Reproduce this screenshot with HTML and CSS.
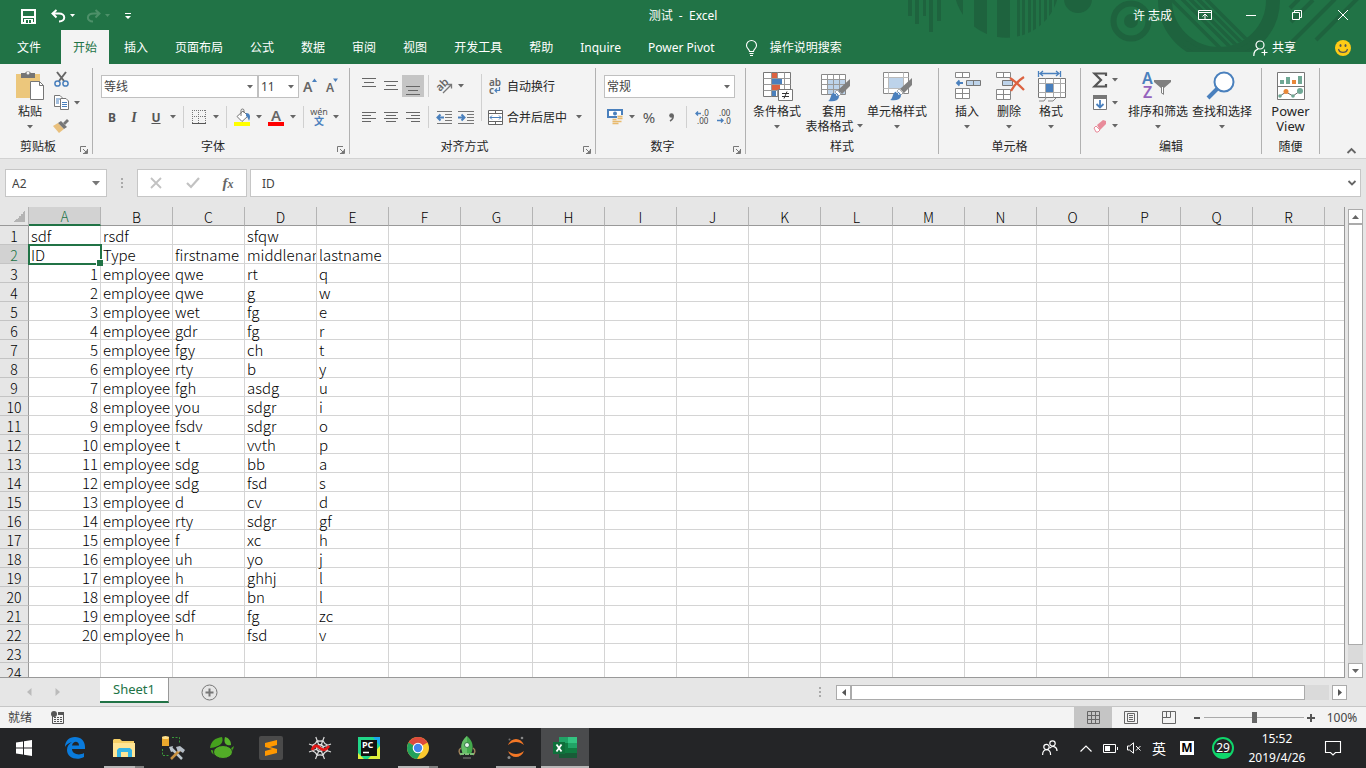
FILE: index.html
```html
<!DOCTYPE html>
<html lang="zh-CN">
<head>
<meta charset="utf-8">
<title>测试 - Excel</title>
<link rel="stylesheet" href="styles.css">
</head>
<body>
<svg class="defs" width="0" height="0" aria-hidden="true">
  <symbol id="caret" viewBox="0 0 6 4"><path d="M0 0h6L3 3.5z" fill="#666"/></symbol>
  <symbol id="launch" viewBox="0 0 8 8"><path d="M.5 6V.5H6M3 3l3 3M7.500 3v4.500H3" fill="none" stroke="#777"/><path d="M7 4v3H4z" fill="#777"/></symbol>
  <symbol id="brush" viewBox="0 0 22 23"><path d="M22 0v7l-8 8-4-4z" fill="#808080"/><path d="M9 11l4 4-2 2-4-4z" fill="#fff" stroke="#808080" stroke-width=".6"/><path d="M0 22c3-1 2-6 5-8 3-1 6 1 6 4-1 4-5 5-11 4z" fill="#4a80bd"/><path d="M6 14c2 0 3 2 3 3" stroke="#fff" fill="none"/></symbol>
</svg>

<header class="top">
  <svg class="art" width="466" height="64" viewBox="0 0 466 64" aria-hidden="true">
    <clipPath id="c1"><circle cx="106.500" cy="-15" r="52.700"/></clipPath>
    <clipPath id="c2"><circle cx="319" cy="0" r="47"/></clipPath>
    <clipPath id="c3"><path d="M240 0h160v52H240z"/></clipPath>
    <g fill="#1e633e">
      <path d="M8 0h4v16H8zM15 0h4v24h-4zM23 0h3v16h-3zM29 0h4v32h-4zM37 0h4v21h-4z"/>
      <path clip-path="url(#c1)" d="M50 0h13v50H50zM74 0h13v50H74zM97 0h13v50H97zM117 0h3v50h-3zM122 0h3v50h-3zM128 0h3v50h-3zM133 0h3v50h-3zM139 0h2v50h-2zM144 0h3v50h-3zM149 0h3v50h-3zM154 0h3v50h-3z"/>
      <circle cx="178" cy="-1" r="14"/><circle cx="231" cy="21" r="7"/>
    </g>
    <g fill="none" stroke="#1e633e">
      <circle cx="231" cy="21" r="17.500" stroke-width="6"/>
      <circle cx="319" cy="0" r="54" stroke-width="14" clip-path="url(#c3)"/>
      <path d="M284 43l16 9h38l16-9" stroke-width="6" clip-path="url(#c3)"/>
      <path d="M262-10l60 60M273-10l60 60M281-10l60 60M289-10l60 60M297-10l60 60" stroke-width="3.500" clip-path="url(#c2)"/>
      <path d="M390 8l9-9M391 22l22-22M390 44l45-45M416 40l42-42" stroke-width="4"/>
    </g>
  </svg>
  <div class="titlebar">
    <div class="quick">
      <button class="q-save" aria-label="保存"><svg width="15" height="15" viewBox="0 0 15 15"><path d="M1 1h13v13H1zM1 8h13" fill="none" stroke="#fff" stroke-width="2"/><path d="M3 10h9v4H3z" fill="#fff"/><path d="M5 11h2v3H5zM8 11h2v3H8z" fill="#217346"/></svg></button>
      <button class="q-undo" aria-label="撤消"><svg width="25" height="14" viewBox="0 0 25 14"><path d="M5.500 1L1.500 4.500l4 4M2 4.500h6c7 0 7 8 0 8" fill="none" stroke="#fff" stroke-width="2"/><path d="M19 5h5l-2.500 3z" fill="#fff"/></svg></button>
      <button class="q-redo" aria-label="恢复"><svg width="25" height="14" viewBox="0 0 25 14"><path d="M9.500 1l4 3.500-4 4M13 4.500H8c-8 0-8 8-1 8" fill="none" stroke="#4d9069" stroke-width="2"/><path d="M19 5h5l-2.500 3z" fill="#4d9069"/></svg></button>
      <button class="q-more" aria-label="自定义快速访问工具栏"><svg width="6" height="7" viewBox="0 0 6 7"><path d="M0 0h6v1H0zM0 3h6L3 6z" fill="#fff"/></svg></button>
    </div>
    <div class="doc">测试&nbsp; - &nbsp;Excel</div>
    <div class="win">
      <span class="user">许 志成</span>
      <button aria-label="功能区显示选项"><svg width="14" height="12" viewBox="0 0 14 12"><path d="M.5 1.500h13v9H.5zM.5 3.500h13M7 10V5.500M4.500 7.500L7 5l2.500 2.500" fill="none" stroke="#fff"/></svg></button>
      <button aria-label="最小化"><svg width="10" height="10" viewBox="0 0 10 10"><path d="M0 5.500h10" stroke="#fff"/></svg></button>
      <button aria-label="还原"><svg width="10" height="10" viewBox="0 0 10 10"><path d="M.5 2.500h7v7h-7zM2.500 2.500v-2h7v7h-2" fill="none" stroke="#fff"/></svg></button>
      <button aria-label="关闭"><svg width="10" height="10" viewBox="0 0 10 10"><path d="M0 0l10 10M10 0L0 10" stroke="#fff"/></svg></button>
    </div>
  </div>
  <nav class="tabs">
    <button class="file">文件</button><button class="on">开始</button><button>插入</button><button>页面布局</button><button>公式</button><button>数据</button><button>审阅</button><button>视图</button><button>开发工具</button><button>帮助</button><button>Inquire</button><button>Power Pivot</button>
    <button class="tell"><svg width="13" height="16" viewBox="0 0 13 16"><path d="M4.500 11.500C4.500 9 1.500 8.500 1.500 5.500a5 5 0 0 1 10 0c0 3-3 3.500-3 6zM4.500 13.500h4M5 15.500h3" fill="none" stroke="#fff" stroke-width="1.100"/></svg>操作说明搜索</button>
    <button class="share"><svg width="15" height="16" viewBox="0 0 15 16"><circle cx="7" cy="5" r="4" fill="none" stroke="#fff" stroke-width="1.200"/><path d="M.8 16c0-5 2-6 4.500-7M8.500 12.500h6M11.500 9.500v6" fill="none" stroke="#fff" stroke-width="1.200"/></svg>共享</button>
    <button class="smile" aria-label="反馈"><svg width="16" height="16" viewBox="0 0 16 16"><circle cx="8" cy="8" r="8" fill="#fecb16"/><ellipse cx="5.500" cy="5.500" rx="1" ry="1.600" fill="#555"/><ellipse cx="10.500" cy="5.500" rx="1" ry="1.600" fill="#555"/><path d="M3.500 9c1 4.500 8 4.500 9 0" fill="none" stroke="#555" stroke-width="1.200"/></svg></button>
  </nav>
</header>

<section class="ribbon" aria-label="开始">
  <div class="group g-clip">
    <div class="tools">
      <button class="big paste"><svg width="28" height="32" viewBox="0 0 28 32"><path d="M0 4h24v24H0z" fill="#ecc77c"/><path d="M5 3h4a3.500 3.500 0 0 1 6 0h4v5H5z" fill="#757575"/><circle cx="12" cy="3" r="1.500" fill="#f3f3f3"/><path d="M14.500 11.500h9l4 4v14h-13z" fill="#fff" stroke="#777"/><path d="M23.500 11.500v4h4" fill="none" stroke="#777"/></svg><span>粘贴</span><svg class="caret"><use href="#caret"/></svg></button>
      <div class="stack">
        <button aria-label="剪切"><svg width="15" height="15" viewBox="0 0 15 15"><path d="M3 0l7 9M12 0L5 9" stroke="#666" stroke-width="2"/><circle cx="3.500" cy="11.500" r="2.600" fill="none" stroke="#4a80bd" stroke-width="1.500"/><circle cx="11.500" cy="11.500" r="2.600" fill="none" stroke="#4a80bd" stroke-width="1.500"/></svg></button>
        <button aria-label="复制"><svg width="15" height="15" viewBox="0 0 15 15"><path d="M.5.500H6l2 2v9H.5z" fill="#fff" stroke="#777"/><path d="M2 4h4M2 6h3M2 8h3" stroke="#4a80bd"/><path d="M6.500 3.500H12l2.500 2.500v8.500h-8z" fill="#fff" stroke="#777"/><path d="M8 7.500h5M8 9.500h5M8 11.500h5" stroke="#4a80bd"/></svg></button>
        <button class="dd" aria-label="复制选项"><svg class="caret"><use href="#caret"/></svg></button>
        <button aria-label="格式刷"><svg width="16" height="14" viewBox="0 0 16 14"><path d="M0 7l5-3 6 6-5 4z" fill="#e9c07d"/><path d="M5 4l3-2 6 6-3 2z" fill="#777"/><path d="M10 4l4-4 2 2-4 4z" fill="#777"/></svg></button>
      </div>
    </div>
    <footer><span>剪贴板</span><button aria-label="剪贴板窗格"><svg width="8" height="8"><use href="#launch"/></svg></button></footer>
  </div>

  <div class="group g-font">
    <div class="tools rows">
      <div class="row">
        <select class="f-name" aria-label="字体"><option>等线</option></select><select class="f-size" aria-label="字号"><option>11</option></select>
        <button class="tb" aria-label="增大字号"><svg width="14" height="16" viewBox="0 0 14 16"><text x="0" y="14" class="ic" font-size="14">A</text><path d="M9 4h5l-2.500-3.500z" fill="#4a80bd"/></svg></button>
        <button class="tb" aria-label="减小字号"><svg width="14" height="16" viewBox="0 0 14 16"><text x="1" y="14" class="ic" font-size="12">A</text><path d="M8 .5h5L10.500 4z" fill="#4a80bd"/></svg></button>
      </div>
      <div class="row">
        <button class="tb b">B</button><button class="tb i">I</button><button class="tb u">U</button><button class="dd" aria-label="下划线选项"><svg class="caret"><use href="#caret"/></svg></button><i class="sep"></i>
        <button class="tb" aria-label="边框"><svg width="14" height="14" viewBox="0 0 14 14"><path d="M0 .5h14M.5 0v13M13.500 0v13M6.500 0v13M0 6.500h14" stroke="#777" stroke-dasharray="1 1"/><path d="M0 13.500h14" stroke="#555"/></svg></button><button class="dd" aria-label="边框选项"><svg class="caret"><use href="#caret"/></svg></button><i class="sep"></i>
        <button class="tb" aria-label="填充颜色"><svg width="17" height="17" viewBox="0 0 17 17"><path d="M3 7.500L9 2l5 5-6 5.500z" fill="#fff" stroke="#777"/><path d="M7 7V1.500a1.500 1.500 0 0 1 3 0V4" fill="none" stroke="#777"/><path d="M12 4c4 0 5 3 3 8-1-2-1-4-3-5z" fill="#4a80bd"/><path d="M0 13h16v4H0z" fill="#ff0"/></svg></button><button class="dd" aria-label="填充选项"><svg class="caret"><use href="#caret"/></svg></button>
        <button class="tb" aria-label="字体颜色"><svg width="17" height="17" viewBox="0 0 17 17"><text x="3" y="12" class="ic" font-size="15">A</text><path d="M0 13h16v4H0z" fill="red"/></svg></button><button class="dd" aria-label="字体颜色选项"><svg class="caret"><use href="#caret"/></svg></button><i class="sep"></i>
        <button class="tb wen" aria-label="显示拼音字段"><span>wén</span><b>文</b></button><button class="dd" aria-label="拼音选项"><svg class="caret"><use href="#caret"/></svg></button>
      </div>
    </div>
    <footer><span>字体</span><button aria-label="字体设置"><svg width="8" height="8"><use href="#launch"/></svg></button></footer>
  </div>

  <div class="group g-align">
    <div class="tools">
      <div class="rows">
        <div class="row">
          <button class="tb" aria-label="顶端对齐"><svg width="14" height="16" viewBox="0 0 14 16"><path d="M0 .5h14M2 4.500h10M0 8.500h14" stroke="#666"/></svg></button><button class="tb" aria-label="垂直居中"><svg width="14" height="16" viewBox="0 0 14 16"><path d="M0 3.500h14M2 7.500h10M0 11.500h14" stroke="#666"/></svg></button><button class="tb sel" aria-label="底端对齐"><svg width="14" height="16" viewBox="0 0 14 16"><path d="M0 8.500h14M2 12.500h10M0 16.500h14" stroke="#666"/></svg></button><i class="sep"></i>
          <button class="tb" aria-label="方向"><svg width="17" height="16" viewBox="0 0 17 16"><text x="0" y="0" class="ic" font-size="11" transform="translate(4 14) rotate(-45)">ab</text><path d="M7 15l8-8M11.500 6.500H15.500v4" fill="none" stroke="#777" stroke-width="1.300"/></svg></button><button class="dd" aria-label="方向选项"><svg class="caret"><use href="#caret"/></svg></button>
        </div>
        <div class="row">
          <button class="tb" aria-label="左对齐"><svg width="14" height="11" viewBox="0 0 14 11"><path d="M0 .5h14M0 3.500h9M0 6.500h14M0 9.500h9" stroke="#666"/></svg></button><button class="tb" aria-label="居中"><svg width="14" height="11" viewBox="0 0 14 11"><path d="M0 .5h14M2 3.500h10M0 6.500h14M2 9.500h10" stroke="#666"/></svg></button><button class="tb" aria-label="右对齐"><svg width="14" height="11" viewBox="0 0 14 11"><path d="M0 .5h14M5 3.500h9M0 6.500h14M5 9.500h9" stroke="#666"/></svg></button><i class="sep"></i>
          <button class="tb" aria-label="减少缩进"><svg width="16" height="13" viewBox="0 0 16 13"><path d="M1 .5h15M9 3.500h7M9 6.500h7M9 9.500h7M1 12.500h15" stroke="#777"/><path d="M8 6.500H2M4.500 3.500l-3 3 3 3" fill="none" stroke="#4a80bd" stroke-width="2"/></svg></button><button class="tb" aria-label="增加缩进"><svg width="16" height="13" viewBox="0 0 16 13"><path d="M0 .5h16M9 3.500h7M9 6.500h7M9 9.500h7M0 12.500h16" stroke="#777"/><path d="M0 6.500h6M3.500 3.500l3 3-3 3" fill="none" stroke="#4a80bd" stroke-width="2"/></svg></button>
        </div>
      </div>
      <i class="sep tall"></i>
      <div class="rows">
        <button class="wide"><svg width="15" height="16" viewBox="0 0 15 16"><text x="1" y="8" class="ic" font-size="10">ab</text><text x="1" y="16" class="ic" font-size="10">c</text><path d="M11.500 9v3.500H7M9 10.500l-2 2 2 2" fill="none" stroke="#4a80bd" stroke-width="1.200"/></svg>自动换行</button>
        <div class="row"><button class="wide"><svg width="15" height="15" viewBox="0 0 15 15"><path d="M.5.500h14v14H.5zM.5 3.500h14M.5 11.500h14M7.500 0v4M7.500 11v4" fill="#fff" stroke="#666"/><path d="M2 7.500h11M4 5.500l-2 2 2 2M11 5.500l2 2-2 2" fill="none" stroke="#4a80bd"/></svg>合并后居中</button><button class="dd wd" aria-label="合并选项"><svg class="caret"><use href="#caret"/></svg></button></div>
      </div>
    </div>
    <footer><span>对齐方式</span><button aria-label="对齐设置"><svg width="8" height="8"><use href="#launch"/></svg></button></footer>
  </div>

  <div class="group g-num">
    <div class="tools rows">
      <div class="row"><select class="n-fmt" aria-label="数字格式"><option>常规</option></select></div>
      <div class="row">
        <button class="tb" aria-label="会计数字格式"><svg width="17" height="16" viewBox="0 0 17 16"><path d="M1 1h14v7H1z" fill="#fff" stroke="#4a80bd" stroke-width="2"/><circle cx="8" cy="4.500" r="2" fill="#4a80bd"/><path d="M10 6h7v8h-3v2H5v-6h5z" fill="#f3f3f3"/><path d="M10.500 7.500h5M10.500 9.500h5M5.500 10.500h4M5.500 12.500h9M5.500 14.500h6" stroke="#e8b96c" stroke-width="1.600"/></svg></button><button class="dd" aria-label="会计格式选项"><svg class="caret"><use href="#caret"/></svg></button><button class="tb pct">%</button><button class="tb com" aria-label="千位分隔样式"><svg width="5" height="9" viewBox="0 0 5 9"><circle cx="2.500" cy="2.500" r="2.300" fill="#666"/><path d="M3.800 2c1 3-1 5-2.800 6" fill="none" stroke="#666" stroke-width="1.500"/></svg></button><i class="sep"></i>
        <button class="tb" aria-label="增加小数位数"><svg width="15" height="14" viewBox="0 0 15 14"><text x="7" y="6" class="dec">.0</text><text x="2" y="14" class="dec">.00</text><path d="M6 3.500H1M3 1.500l-2 2 2 2" fill="none" stroke="#4a80bd" stroke-width="1.400"/></svg></button><button class="tb" aria-label="减少小数位数"><svg width="15" height="14" viewBox="0 0 15 14"><text x="2" y="6" class="dec">.00</text><text x="7" y="14" class="dec">.0</text><path d="M0 10.500h6M4 8.500l2 2-2 2" fill="none" stroke="#4a80bd" stroke-width="1.400"/></svg></button>
      </div>
    </div>
    <footer><span>数字</span><button aria-label="数字设置"><svg width="8" height="8"><use href="#launch"/></svg></button></footer>
  </div>

  <div class="group g-style">
    <div class="tools">
      <button class="big w58"><svg width="32" height="32" viewBox="0 0 32 32"><path d="M2.500 2.500h27v24h-27z" fill="#fff" stroke="#777"/><path d="M2.500 8.500h27M2.500 14.500h27M2.500 20.500h27M10.500 2.500v24M16.500 2.500v24M23.500 2.500v24" stroke="#999"/><path d="M11 3h5v5h-5zM11 15h8v5h-8z" fill="#dc6240"/><path d="M11 9h10v5H11zM11 21h4v5h-4z" fill="#4a80bd"/><path d="M17.500 19.500h14v11h-14z" fill="#fff" stroke="#777"/><path d="M21 23.500h7M21 26.500h7M26 21.500l-3 7" stroke="#333"/></svg><span>条件格式</span><svg class="caret"><use href="#caret"/></svg></button>
      <button class="big w56"><svg width="32" height="32" viewBox="0 0 32 32"><path d="M3.500 4.500h24v20h-24z" fill="#fff" stroke="#888"/><path d="M10 10h17v14H10z" fill="#bdd3ea"/><path d="M3.500 9.500h24M3.500 14.500h24M3.500 19.500h24M9.500 4.500v20M15.500 4.500v20M21.500 4.500v20" stroke="#999"/><use href="#brush" x="10" y="9" width="22" height="23"/></svg><span>套用<br>表格格式 <svg class="caret"><use href="#caret"/></svg></span></button>
      <button class="big w70"><svg width="32" height="32" viewBox="0 0 32 32"><path d="M2.500 2.500h25v21h-25z" fill="#fff" stroke="#888"/><path d="M2.500 7.500h25M2.500 18.500h25M7.500 2.500v21M22.500 2.500v21" stroke="#bbb"/><path d="M8 8h14v10H8z" fill="#bdd3ea"/><use href="#brush" x="9" y="8" width="22" height="23"/></svg><span>单元格样式</span><svg class="caret"><use href="#caret"/></svg></button>
    </div>
    <footer><span>样式</span></footer>
  </div>

  <div class="group g-cell">
    <div class="tools">
      <button class="big w42"><svg width="32" height="32" viewBox="0 0 32 32"><path d="M4.500 2.500h14v5h-14zM11.500 2.500v5M4.500 18.500h14v10h-14zM4.500 23.500h14M11.500 18.500v10" fill="#fff" stroke="#888"/><path d="M15.500 10.500h14v5h-14zM22.500 10.500v5" fill="#bdd3ea" stroke="#777"/><path d="M12 13H6M8.500 10.500L6 13l2.500 2.500" fill="none" stroke="#4a80bd" stroke-width="1.800"/></svg><span>插入</span><svg class="caret"><use href="#caret"/></svg></button>
      <button class="big w42"><svg width="32" height="32" viewBox="0 0 32 32"><path d="M3.500 2.500h14v5h-14zM10.500 2.500v5M3.500 19.500h14v10h-14zM3.500 24.500h14M10.500 19.500v10" fill="#fff" stroke="#888"/><path d="M9.500 10.500h10v5h-10z" fill="#bdd3ea" stroke="#777"/><path d="M17 8c5 3 9 7 14 12M31 7c-5 3-9 7-13 14" fill="none" stroke="#dc6240" stroke-width="2.300"/></svg><span>删除</span><svg class="caret"><use href="#caret"/></svg></button>
      <button class="big w42"><svg width="32" height="32" viewBox="0 0 32 32"><path d="M3.500 1v6M25.500 1v6M5 3.500h19M8 1L5 3.500 8 6M21 1l3 2.500L21 6" fill="none" stroke="#4a80bd" stroke-width="1.300"/><path d="M3.500 8.500h27v19h-27z" fill="#fff" stroke="#777"/><path d="M3.500 13.500h27M3.500 22.500h27M10.500 8.500v19M18.500 8.500v19M25.500 8.500v19" stroke="#aaa"/><path d="M11 14h7v8h-7z" fill="#4a80bd"/><path d="M4 31h5l2-3M13 31h5l3-3" fill="none" stroke="#888"/></svg><span>格式</span><svg class="caret"><use href="#caret"/></svg></button>
    </div>
    <footer><span>单元格</span></footer>
  </div>

  <div class="group g-edit">
    <div class="tools">
      <div class="stack">
        <button aria-label="自动求和"><svg width="16" height="16" viewBox="0 0 16 16"><path d="M14 4V1.500H2.500L9 8l-6.500 6.500H14V12" fill="none" stroke="#555" stroke-width="2.200"/></svg></button><button class="dd" aria-label="求和选项"><svg class="caret"><use href="#caret"/></svg></button>
        <button aria-label="填充"><svg width="14" height="15" viewBox="0 0 14 15"><path d="M.5.500h13v14H.5z" fill="#fff" stroke="#777"/><path d="M0 0h14v4H0z" fill="#777"/><path d="M7 5v7M3.500 9L7 12.500 10.500 9" fill="none" stroke="#4a80bd" stroke-width="1.800"/></svg></button><button class="dd" aria-label="填充选项"><svg class="caret"><use href="#caret"/></svg></button>
        <button aria-label="清除"><svg width="14" height="14" viewBox="0 0 14 14"><path d="M1 9l2-2 4 4-2 2H3z" fill="#fff" stroke="#e88b9a"/><path d="M4 6l6-5 3 1v3l-6 6z" fill="#e88b9a"/></svg></button><button class="dd" aria-label="清除选项"><svg class="caret"><use href="#caret"/></svg></button>
      </div>
      <button class="big w64"><svg width="32" height="32" viewBox="0 0 32 32"><text x="0" y="14" font-size="16" font-weight="600" fill="#4a80bd">A</text><text x="1" y="28" font-size="16" font-weight="600" fill="#9563bd">Z</text><path d="M12 10h17v2l-7 6v7l-3-2v-5l-7-6z" fill="#808080"/><path d="M20 17h1v6h-1z" fill="#fff"/></svg><span>排序和筛选</span><svg class="caret"><use href="#caret"/></svg></button>
      <button class="big w64"><svg width="32" height="32" viewBox="0 0 32 32"><circle cx="18" cy="12" r="9.500" fill="#fff" stroke="#4a80bd" stroke-width="2"/><path d="M12 18L2 28" stroke="#4a80bd" stroke-width="4"/></svg><span>查找和选择</span><svg class="caret"><use href="#caret"/></svg></button>
    </div>
    <footer><span>编辑</span></footer>
  </div>

  <div class="group g-pv">
    <div class="tools"><button class="big w58 lat"><svg width="32" height="32" viewBox="0 0 32 32"><path d="M2.500 2.500h27v27h-27zM2.500 16.500h27" fill="#fff" stroke="#777"/><path d="M5 10h4v4H5zM11 7h4v7h-4zM23 6h4v8h-4z" fill="#70a895"/><path d="M17 10h4v4h-4z" fill="#e8883a"/><path d="M5 26l6-4 7 4 7-5" fill="none" stroke="#666"/><circle cx="5" cy="26" r="1.800" fill="#70a895"/><circle cx="11" cy="21.500" r="2.500" fill="#e8883a"/><circle cx="18" cy="26" r="1.800" fill="#70a895"/><circle cx="25" cy="21" r="3" fill="#70a895"/></svg><span>Power<br>View</span></button></div>
    <footer><span>随便</span></footer>
  </div>
  <button class="collapse" aria-label="折叠功能区"><svg width="9" height="6" viewBox="0 0 9 6"><path d="M.5 5l4-4 4 4" fill="none" stroke="#666" stroke-width="1.800"/></svg></button>
</section>

<section class="fbar">
  <div class="namebox"><input aria-label="名称框" value="A2"><button aria-label="名称列表"><svg width="8" height="5" viewBox="0 0 8 5"><path d="M0 0h8L4 4.500z" fill="#777"/></svg></button></div>
  <svg class="grip" width="2" height="11" viewBox="0 0 2 11"><path d="M0 0h2v2H0zM0 4h2v2H0zM0 8h2v2H0z" fill="#aaa"/></svg>
  <div class="fx">
    <button aria-label="取消"><svg width="12" height="12" viewBox="0 0 12 12"><path d="M1 1l10 10M11 1L1 11" stroke="#c2c2c2" stroke-width="1.800"/></svg></button>
    <button aria-label="输入"><svg width="13" height="12" viewBox="0 0 13 12"><path d="M1 6l4 4 8-9" fill="none" stroke="#c2c2c2" stroke-width="2.200"/></svg></button>
    <button class="fxb">f<small>x</small></button>
  </div>
  <div class="formula"><input aria-label="编辑栏" value="ID"><button aria-label="展开编辑栏"><svg width="8" height="6" viewBox="0 0 8 6"><path d="M.5 1L4 4.500 7.500 1" fill="none" stroke="#666" stroke-width="1.800"/></svg></button></div>
</section>

<main class="sheet">
  <div class="cells"><table id="grid"></table></div>
  <div class="vbar"><button aria-label="向上滚动"><svg width="7" height="4" viewBox="0 0 7 4"><path d="M0 4h7L3.500 0z" fill="#666"/></svg></button><div class="vtrack"><div class="vthumb"></div></div><button aria-label="向下滚动"><svg width="7" height="4" viewBox="0 0 7 4"><path d="M0 0h7L3.500 4z" fill="#666"/></svg></button></div>
</main>

<section class="sheets">
  <button class="nav" aria-label="上一工作表"><svg width="5" height="8" viewBox="0 0 5 8"><path d="M4.500 0v8L0 4z" fill="#bbb"/></svg></button>
  <button class="nav" aria-label="下一工作表"><svg width="5" height="8" viewBox="0 0 5 8"><path d="M.5 0v8L5 4z" fill="#bbb"/></svg></button>
  <button class="stab">Sheet1</button>
  <button class="add" aria-label="新工作表"><svg width="17" height="17" viewBox="0 0 17 17"><circle cx="8.500" cy="8.500" r="7.500" fill="none" stroke="#777"/><path d="M4.500 8.500h8M8.500 4.500v8" stroke="#777" stroke-width="2"/></svg></button>
  <svg class="grip" width="2" height="11" viewBox="0 0 2 11"><path d="M0 0h2v2H0zM0 4h2v2H0zM0 8h2v2H0z" fill="#aaa"/></svg>
  <div class="hbar"><button aria-label="向左滚动"><svg width="4" height="7" viewBox="0 0 4 7"><path d="M4 0v7L0 3.500z" fill="#555"/></svg></button><div class="htrack"><div class="hthumb"></div></div><button aria-label="向右滚动"><svg width="4" height="7" viewBox="0 0 4 7"><path d="M0 0v7l4-3.500z" fill="#555"/></svg></button></div>
</section>

<section class="status">
  <span>就绪</span>
  <button class="macro" aria-label="录制宏"><svg width="14" height="13" viewBox="0 0 14 13"><path d="M1.500 4v8.500h11V3" fill="none" stroke="#555"/><path d="M7 1h6v3H7z" fill="#555"/><circle cx="3" cy="3" r="3" fill="#555"/><path d="M3 6.500h8M3 8.500h8M3 10.500h8" stroke="#555" stroke-dasharray="2 1"/></svg></button>
  <div class="views">
    <button class="sel" aria-label="普通"><svg width="13" height="13" viewBox="0 0 13 13"><path d="M.5.500h12v12H.5zM.5 4.500h12M.5 8.500h12M4.500.500v12M8.500.500v12" fill="none" stroke="#666"/></svg></button>
    <button aria-label="页面布局视图"><svg width="14" height="13" viewBox="0 0 14 13"><path d="M.5.500h13v12H.5zM3.500 2.500h7v8h-7zM5 4.500h4M5 6.500h4M5 8.500h4" fill="none" stroke="#666"/></svg></button>
    <button aria-label="分页预览"><svg width="14" height="13" viewBox="0 0 14 13"><path d="M.5.500h13v12H.5zM4.500.500v6M8.500.500v6h-8" fill="none" stroke="#666"/></svg></button>
  </div>
  <button class="zm" aria-label="缩小"><svg width="8" height="8" viewBox="0 0 8 8"><path d="M1 4h6" stroke="#555" stroke-width="2"/></svg></button>
  <input type="range" aria-label="显示比例" min="0" max="100" value="50">
  <button class="zm" aria-label="放大"><svg width="8" height="8" viewBox="0 0 8 8"><path d="M0 4h8M4 0v8" stroke="#555" stroke-width="2"/></svg></button>
  <button class="pc">100%</button>
</section>

<footer class="taskbar">
  <button class="start" aria-label="开始菜单"><svg width="16" height="16" viewBox="0 0 16 16"><path d="M0 2.500l7-1V7.500H0zM8 1.300L16 0v7.500H8zM0 8.500h7v6l-7-1zM8 8.500h8V16l-8-1.200z" fill="#fff"/></svg></button>
  <button aria-label="Edge"><svg width="22" height="22" viewBox="0 0 22 22"><path d="M1 10C1 4 5 0 11 0s10 4 10 10v2H8c0 5 7 7 12 4v4c-7 4-17 1-17-7 0-4 2-6 5-8-4 1-6 3-7 5zM8 8.500h7c0-5-6-5-7 0z" fill="#0a7bdc" fill-rule="evenodd"/></svg></button>
  <button class="run more" aria-label="文件资源管理器"><svg width="22" height="20" viewBox="0 0 22 20"><path d="M0 2l1-1h6l2 2h12v15H0z" fill="#f5cf66"/><path d="M0 5h22v14H0z" fill="#ffe594"/><path d="M4 12l2-2h11l2 2v7h-4v-5H8v5H4z" fill="#36b5e5"/></svg></button>
  <button aria-label="数据库工具"><svg width="24" height="24" viewBox="0 0 24 24"><path d="M1 1h7v9H1z" fill="#eba92d"/><ellipse cx="4.500" cy="1.500" rx="3.500" ry="1.500" fill="#ffe08a"/><path d="M11 1.500h7.500V8M1.500 13v6.500H9" fill="none" stroke="#3a9b3a" stroke-dasharray="2 1.500"/><path d="M10 12l11 11" stroke="#bcc6cc" stroke-width="2.500"/><path d="M10 23l9-9" stroke="#c8913f" stroke-width="2.500"/><path d="M15 11l4-1 5 4-2 3-3-2-2 1z" fill="#b5bdc6"/><path d="M8 11l4-1-1 3 2 2-3 1z" fill="#bcc6cc"/></svg></button>
  <button aria-label="XMind"><svg width="24" height="22" viewBox="0 0 24 22"><path d="M0 11C1 4 5 1 12 0c2 5-1 10-12 11z" fill="#45a11d"/><path d="M15 0c4 1 6 4 6 8-4 1-8-1-6-8z" fill="#58b52c"/><path d="M24 9c-1 4-2 6-4 8V12zM1 13c2 0 3 1 4 5-3-1-4-3-4-5z" fill="#45a11d"/><ellipse cx="13" cy="15" rx="9.500" ry="6.500" fill="#52ac27" stroke="#242527"/></svg></button>
  <button aria-label="Sublime Text"><svg width="24" height="24" viewBox="0 0 24 24"><rect width="24" height="24" rx="2" fill="#4a4a4a"/><path d="M6 7l12-3v5l-7 2 7 2v4L6 20v-5l7-2-7-2z" fill="#ff9800"/></svg></button>
  <button aria-label="Spyder"><svg width="24" height="24" viewBox="0 0 24 24"><path d="M15 4.600q1 3 4.400 4.400-1 3 0 6-3.400 1-4.400 4.400-3-1-6 0-1-3.400-4.400-4.400 1-3 0-6Q8 8 9 4.600q3 1 6 0zM13.500 8.500l2 2v3l-2 2h-3l-2-2v-3l2-2zM12 12l4.200-11M12 12l11-4M12 12l11 4M12 12l4.500 11M12 12L7.500 23M12 12L1 16M12 12L1 8M12 12L7.800 1" fill="none" stroke="#ddd" stroke-width="1.200"/><path d="M4 14c2-5 5-5 8-2s6 2 9-2" fill="none" stroke="#e31818" stroke-width="2.800"/></svg></button>
  <button aria-label="PyCharm"><svg width="22" height="22" viewBox="0 0 22 22"><path d="M0 0h22v22H0z" fill="#21d789"/><path d="M15 0h7v9z" fill="#19a8f0"/><path d="M10 22l12-13v13zM0 22v-6l6 6z" fill="#dfee3b"/><path d="M3 3h16v16H3z" fill="#111"/><text x="4" y="11" font-size="9" font-weight="700" fill="#fff">PC</text><path d="M5 15.500h6" stroke="#fff" stroke-width="1.500"/></svg></button>
  <button class="run more" aria-label="Chrome"><svg width="22" height="22" viewBox="0 0 22 22"><circle cx="11" cy="11" r="11" fill="#fbc92e"/><path d="M11 11L1.500 5.500a11 11 0 0 1 19 0z" fill="#dc4a3d"/><path d="M1.500 5.500a11 11 0 0 0 8.500 16.500l5-8.500-4-2.500z" fill="#22a15d"/><path d="M11 5.500h9.500" stroke="#dc4a3d"/><circle cx="11" cy="11" r="5.300" fill="#fff"/><circle cx="11" cy="11" r="4.200" fill="#4384ee"/></svg></button>
  <button aria-label="火箭"><svg width="18" height="24" viewBox="0 0 18 24"><path d="M9 0c6 5 7 11 4 18H5C2 11 3 5 9 0z" fill="#44aa4c"/><path d="M9 0v18H5C2 11 3 5 9 0z" fill="#65bf68"/><circle cx="9" cy="9" r="2.500" fill="#e8f4ef" stroke="#347b43"/><path d="M3 12c-3 2-2 5 0 7M15 12c3 2 2 5 0 7" fill="none" stroke="#9d805a" stroke-width="1.500"/><path d="M2 18h4M12 18h4M7 18h4" stroke="#7fbd79" stroke-width="2"/><path d="M5 22h8" stroke="#555" stroke-width="2"/></svg></button>
  <button class="run" aria-label="Jupyter"><svg width="20" height="24" viewBox="0 0 20 24"><path d="M2 9c3-8 13-8 16 0-5-4-11-4-16 0zM2 15c3 8 13 8 16 0-5 4-11 4-16 0z" fill="#f37726"/><circle cx="16" cy="2" r="1.300" fill="#888"/><circle cx="3.500" cy="3.500" r="1" fill="#777"/><circle cx="3" cy="21.500" r="1.500" fill="#888"/></svg></button>
  <button class="run act" aria-label="Excel"><svg width="24" height="22" viewBox="0 0 24 22"><path d="M6 0h9v6H6z" fill="#21a366"/><path d="M15 0h9v6h-9z" fill="#33c481"/><path d="M6 6h9v10H6z" fill="#107c41"/><path d="M15 6h9v5h-9z" fill="#21a366"/><path d="M15 11h9v5h-9z" fill="#107c41"/><path d="M6 16h18v5H6z" fill="#185c37"/><path d="M0 5h12v12H0z" fill="#0f703b"/><path d="M3.500 7.500l5 7M8.500 7.500l-5 7" stroke="#fff" stroke-width="1.800"/></svg></button>
  <div class="tray">
    <button class="t-people" aria-label="人脉"><svg width="16" height="16" viewBox="0 0 16 16"><g fill="none" stroke="#fff" stroke-width="1.200"><circle cx="4.500" cy="7" r="2.700"/><path d="M.6 15c0-7 8-7 8 0"/><circle cx="10.500" cy="3.500" r="2.700"/><path d="M8 8c3-3 7-1 7 3"/></g></svg></button>
    <button class="t24" aria-label="显示隐藏的图标"><svg width="12" height="7" viewBox="0 0 12 7"><path d="M.5 6.500L6 1l5.500 5.500" fill="none" stroke="#fff" stroke-width="1.200"/></svg></button>
    <button class="t24" aria-label="电池"><svg width="15" height="9" viewBox="0 0 15 9"><path d="M.5.500h12v8H.5zM14.500 3v3" fill="none" stroke="#fff"/><path d="M2 2h5v5H2z" fill="#fff"/></svg></button>
    <button class="t24" aria-label="静音"><svg width="14" height="12" viewBox="0 0 14 12"><path d="M.5 4h2L6.500.800v10.400L2.500 8h-2zM9 4l4.500 4.500M13.500 4L9 8.500" fill="none" stroke="#fff"/></svg></button>
    <button class="ime">英</button>
    <button class="t-m"><b>M</b></button>
    <button class="t-29"><b>29</b></button>
    <button class="clock">15:52<br>2019/4/26</button>
    <button class="t-note" aria-label="操作中心"><svg width="16" height="15" viewBox="0 0 16 15"><path d="M.5.500h15v11h-5L8 14l-2.500-2.500h-5z" fill="none" stroke="#fff" stroke-width="1.100"/></svg></button>
  </div>
</footer>
<script src="grid.js"></script>
</body>
</html>
```
FILE: grid.js
```js
// Fills the worksheet table: column letters, row numbers and cell values.
const columns = 'ABCDEFGHIJKLMNOPQR'.split('');
const rows = [
  ['sdf', 'rsdf', '', 'sfqw'],
  ['ID', 'Type', 'firstname', 'middlename', 'lastname']
];
const people = 'qwe rt q|qwe g w|wet fg e|gdr fg r|fgy ch t|rty b y|fgh asdg u|you sdgr i|fsdv sdgr o|t vvth p|sdg bb a|sdg fsd s|d cv d|rty sdgr gf|f xc h|uh yo j|h ghhj l|df bn l|sdf fg zc|h fsd v';
people.split('|').forEach((p, i) => rows.push([i + 1, 'employee', ...p.split(' ')]));
rows.push([], []);

const table = document.getElementById('grid');
const head = table.createTHead().insertRow();
const addHead = (row, text, cls, scope) => {
  const th = document.createElement('th');
  th.textContent = text;
  th.className = cls;
  th.scope = scope;
  row.appendChild(th);
};
addHead(head, '', 'corner', 'col');
columns.forEach((c, i) => addHead(head, c, i === 0 ? 'current' : '', 'col'));
addHead(head, '', 'rest', 'col');

const body = table.createTBody();
rows.forEach((values, r) => {
  const tr = body.insertRow();
  addHead(tr, r + 1, r === 1 ? 'current' : '', 'row');
  for (let c = 0; c <= columns.length; c++) {
    const td = tr.insertCell();
    const v = values[c];
    if (v !== undefined) td.textContent = v;
    if (typeof v === 'number') td.className = 'num';
    if (v === 'middlename') td.className = 'clip';
    if (r === 1 && c === 0) td.className = 'picked';
  }
});
```
FILE: styles.css
```css
* { box-sizing: border-box; }
html, body { height: 100%; }
body {
  margin: 0;
  display: flex;
  flex-direction: column;
  overflow: hidden;
  background: #e6e6e6;
  color: #262626;
  font: 12px/15px "Noto Sans", "Noto Sans CJK SC", sans-serif;
}
button, input, select { font: inherit; color: inherit; margin: 0; padding: 0; border: 0; background: none; border-radius: 0; outline: 0; }
button { display: flex; align-items: center; justify-content: center; white-space: nowrap; }
svg { display: block; flex: none; overflow: visible; }
.defs { position: absolute; }
.caret { width: 6px; height: 4px; }
.ic { font-weight: 600; fill: #666; }
.dec { font-size: 8px; fill: #444; }

/* title bar and tabs */
.top { position: relative; flex: none; background: #217346; color: #fff; }
.art { position: absolute; top: 0; right: 0; overflow: hidden; }
.titlebar { position: relative; display: grid; grid-template-columns: 1fr auto 1fr; align-items: center; height: 30px; }
.quick { display: flex; align-items: center; padding: 2px 0 0 21px; }
.q-undo { margin-left: 15px; }
.q-redo { margin-left: 10px; }
.q-more { margin-left: 14px; }
.win { display: flex; justify-content: flex-end; align-items: center; }
.win button { width: 46px; height: 30px; }
.user { margin-right: 10px; }
.tabs { position: relative; display: flex; height: 34px; padding: 0 15px 0 5px; gap: 3px; }
.tabs button { padding: 1px 12px 0; }
.tabs .file { margin-right: 5px; }
.tabs .on { background: #f3f3f3; color: #217346; }
.tabs .tell { gap: 12px; margin-left: 3px; }
.tabs .share { margin-left: auto; gap: 4px; padding-right: 36px; }
.tabs .smile { padding: 1px 0 0; }

/* ribbon */
.ribbon { flex: none; display: flex; padding: 4px 0; background: #f3f3f3; border-bottom: 1px solid #d2d2d2; }
.group { display: flex; flex-direction: column; justify-content: space-between; height: 86px; border-right: 1px solid #b1b1b1; }
.tools { display: flex; flex: 1; }
.group footer { display: flex; height: 15px; align-items: center; text-align: center; white-space: nowrap; }
.group footer span { flex: 1; }
.group footer button { width: 16px; padding-top: 6px; }
.g-clip { width: 93px; }
.g-font { width: 257px; }
.g-align { width: 246px; }
.g-num { width: 150px; }
.g-style { width: 193px; }
.g-cell { width: 142px; }
.g-edit { width: 181px; }
.g-pv { width: 58px; }
.g-font .tools, .g-align .tools, .g-num .tools { padding-left: 8px; }
.g-style .tools { padding-left: 2px; }
.g-cell .tools { padding-left: 7px; }

.big { flex-direction: column; justify-content: flex-start; padding-top: 2px; text-align: center; }
.big span { margin-top: 2px; }
.big .caret { margin-top: 6px; }
.big span .caret { display: inline-block; margin: 0 0 3px; }
.w42 { width: 42px; }
.w56 { width: 56px; }
.w58 { width: 58px; }
.w64 { width: 64px; }
.w70 { width: 70px; }
.lat span { font-size: 13px; }
.paste { width: 30px; margin: 0 7px 0 15px; }
.stack { display: grid; grid-template-columns: 18px 14px; grid-auto-rows: 23px; align-content: start; align-items: center; }
.g-clip .stack { column-gap: 1px; }
.g-clip .stack > :nth-child(-n+2) { grid-column: 1; }
.g-edit .stack { width: 45px; padding-left: 10px; grid-template-columns: 18px 12px; }
.g-edit .stack button { height: 20px; }

.rows { display: flex; flex-direction: column; gap: 9px; padding-top: 7px; }
.tools.rows { justify-content: flex-start; }
.row { display: flex; height: 22px; }
.tb { width: 22px; height: 22px; }
.sel { background: #c5c5c5; }
.dd { width: 12px; height: 22px; }
.sep { width: 1px; margin: 0 4px; background: #d0d0d0; }
.tall { margin: 6px 6px 18px 4px; }
.wide { height: 22px; gap: 4px; justify-content: flex-start; }
.wd { margin-left: 6px; }
select {
  appearance: none; height: 23px; padding-left: 2px;
  border: 1px solid #c0c0c0; color: #444;
  background: #fff url("data:image/svg+xml,%3Csvg xmlns='http://www.w3.org/2000/svg' width='6' height='4'%3E%3Cpath d='M0 0h6L3 3.500z' fill='%23666'/%3E%3C/svg%3E") no-repeat right 4px center;
}
.f-name { width: 157px; }
.f-size { width: 41px; }
.n-fmt { width: 131px; }
.b, .i, .u { color: #555; font-weight: 700; }
.i { font-style: italic; font-family: "Liberation Serif", serif; font-size: 14px; }
.u { text-decoration: underline; }
.wen { flex-direction: column; font-size: 9px; line-height: 9px; color: #555; }
.wen b { color: #4a80bd; font-size: 10px; line-height: 11px; }
.pct { font-size: 15px; color: #555; }
.collapse { margin: auto 10px 0 auto; }

/* formula bar */
.fbar { flex: none; display: flex; align-items: center; height: 48px; padding: 0 5px; color: #444; }
.namebox, .fx, .formula { display: flex; height: 28px; border: 1px solid #c6c6c6; background: #fff; }
.namebox { width: 102px; }
.namebox input { width: 80px; padding-left: 6px; }
.namebox button { width: 20px; }
.fbar .grip { margin: 0 14px; }
.fx { width: 110px; }
.fx button { width: 36px; }
.fxb { font: italic 700 15px/18px "Liberation Serif", serif; color: #666; align-items: baseline; padding-top: 4px; }
.fxb small { font-size: 12px; }
.formula { flex: 1; margin-left: 3px; }
.formula input { flex: 1; min-width: 0; padding-left: 11px; }
.formula button { width: 16px; }

/* worksheet */
.sheet { flex: 1; min-height: 0; display: flex; }
.cells { flex: 1; min-width: 0; overflow: hidden; border-right: 1px solid #999; border-bottom: 1px solid #999; background: #fff; }
#grid { width: 100%; table-layout: fixed; border-collapse: separate; border-spacing: 0; color: #000; font: 300 15px/16px "Noto Sans CJK SC", sans-serif; }
#grid th, #grid td { width: 72px; height: 19px; padding: 2px 0 0; font-weight: 300; border: 0 solid #d4d4d4; border-width: 0 1px 1px 0; white-space: nowrap; text-align: left; }
#grid td { padding-left: 2px; }
#grid td:last-child { width: auto; border-right: 0; }
#grid .clip { overflow: hidden; }
#grid .num { text-align: right; padding: 2px 2px 0 0; }
#grid th { background: #e6e6e6; text-align: center; font-size: 14px; }
#grid thead th { border-color: #b4b4b4; border-bottom-color: #999; }
#grid thead .corner { width: 29px; background: linear-gradient(135deg, transparent 50%, #b4b4b4 50%) no-repeat 14px 4px / 11px 11px #e6e6e6; }
#grid thead .rest { width: auto; border-right: 0; }
#grid tbody th { border-color: #c4c4c4; border-right-color: #999; }
#grid thead .current { background: #d2d2d2; color: #217346; border-bottom: 2px solid #217346; line-height: 15px; }
#grid tbody .current { background: #d2d2d2; color: #217346; }
#grid .picked { position: relative; outline: 2px solid #217346; outline-offset: -1px; }
.picked::after { content: ""; position: absolute; right: -3px; bottom: -3px; width: 6px; height: 6px; background: #217346; border: 1px solid #fff; border-width: 1px 0 0 1px; }
.vbar { display: flex; flex-direction: column; width: 21px; padding: 2px 3px 0; }
.vbar button, .hbar button { flex: none; width: 15px; height: 15px; background: #fff; border: 1px solid #ababab; }
.vtrack { flex: 1; background: #dadada; }
.vthumb { height: 96%; background: #fff; border: 1px solid #ababab; }

.sheets { flex: none; display: flex; align-items: center; height: 28px; }
.nav { width: 28px; height: 28px; }
.nav:first-child { margin-left: 15px; }
.stab { height: 25px; width: 69px; margin-left: 29px; align-self: flex-start; background: #fff; color: #217346; border-bottom: 2px solid #217346; border-right: 1px solid #999; font-size: 13px; }
.add { margin-left: 32px; }
.sheets .grip { margin-left: auto; margin-right: 15px; }
.hbar { display: flex; width: 511px; margin-right: 19px; }
.htrack { flex: 1; margin-right: 3px; background: #dadada; }
.hthumb { width: 95%; height: 15px; background: #fff; border: 1px solid #ababab; }

/* status bar */
.status { flex: none; display: flex; align-items: center; height: 22px; padding: 0 8px; background: #f3f3f3; border-top: 1px solid #c6c6c6; color: #444; }
.macro { margin-left: 19px; }
.views { display: flex; margin: 0 2px 0 auto; }
.views button { width: 38px; height: 21px; }
.zm { width: 14px; height: 21px; }
.status input { appearance: none; width: 100px; height: 21px; background: linear-gradient(#aaa, #aaa) no-repeat center / 100% 1px; }
.status input::-webkit-slider-thumb { appearance: none; width: 5px; height: 11px; background: #666; }
.pc { margin-left: 8px; width: 32px; }

/* taskbar */
.taskbar { flex: none; display: flex; height: 40px; padding-right: 10px; background: #242527; color: #fff; gap: 1px; }
.taskbar > button { width: 48px; height: 40px; }
.taskbar .start { margin-right: 2px; }
.run { background: linear-gradient(#aaa, #aaa) no-repeat center bottom / 40px 2px; }
.run.more { background: linear-gradient(90deg, #b8b8b8 31px, #808080 31px) no-repeat center bottom / 40px 2px; }
.run.act { background: linear-gradient(#b8b8b8, #b8b8b8) no-repeat center bottom / 48px 2px #4a4b4d; }
.tray { display: flex; align-items: center; margin-left: auto; }
.tray button { height: 40px; }
.t-people { width: 24px; margin-right: 12px; }
.t24 { width: 24px; }
.ime { width: 26px; font-size: 14px; }
.t-m { width: 30px; }
.t-m b { width: 14px; background: #fff; color: #000; text-align: center; line-height: 14px; }
.t-29 { width: 42px; }
.t-29 b { width: 22px; height: 22px; border-radius: 11px; border: 2px solid #0fd66b; background: linear-gradient(transparent 80%, #0fd66b 80%); font-weight: 400; line-height: 18px; text-align: center; }
.clock { width: 66px; line-height: 19px; }
.t-note { width: 46px; padding-top: 1px; }
```
